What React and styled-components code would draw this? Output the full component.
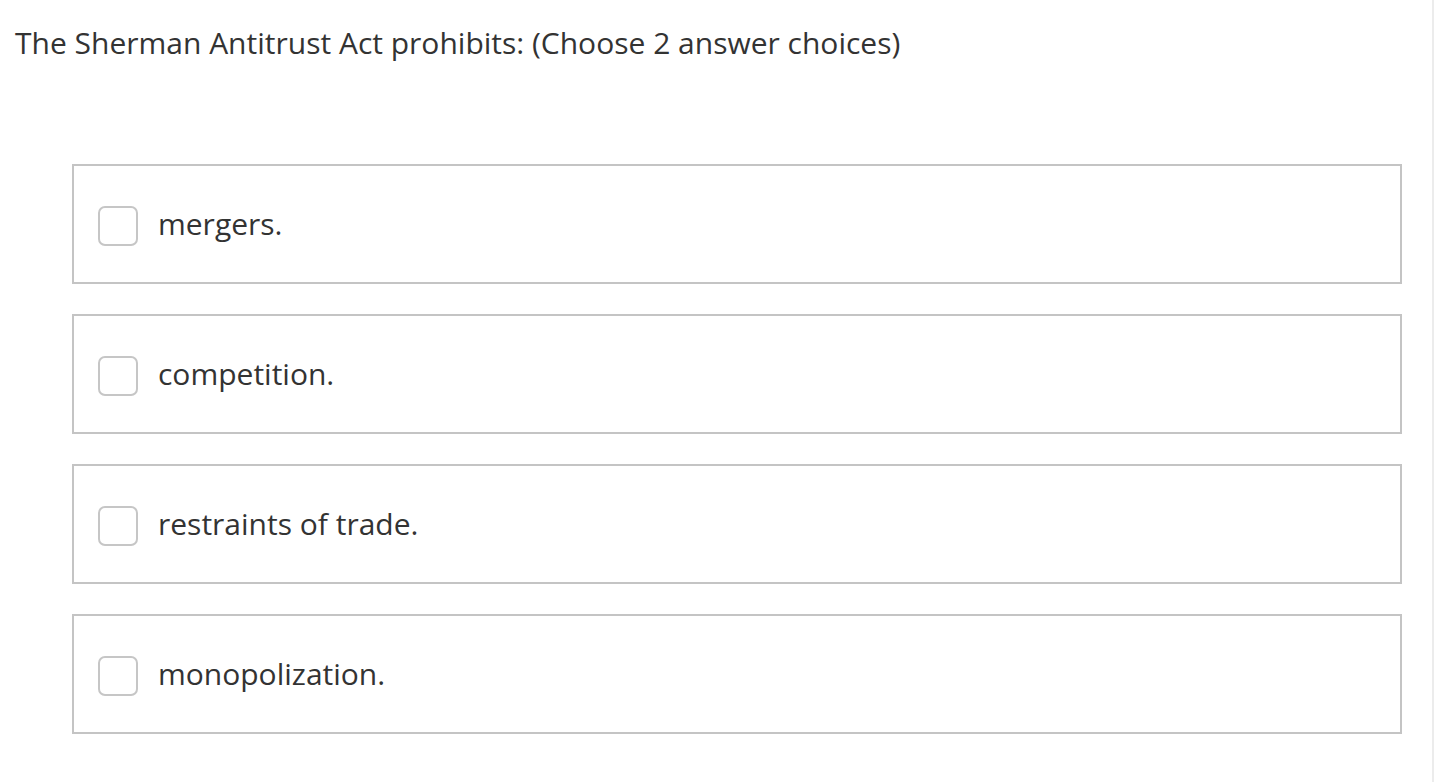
import React from 'react'
import styled, { createGlobalStyle } from 'styled-components'

const GlobalStyle = createGlobalStyle`
  html, body {
    margin: 0;
    padding: 0;
    background: #fff;
  }
  body {
    font-family: "Open Sans", "Noto Sans", sans-serif;
    color: #333;
  }
`

const Page = styled.div`
  box-sizing: border-box;
  min-height: 782px;
  padding: 23px 0 40px 0;
  border-right: 2px solid #ececec;
`

const Question = styled.h1`
  margin: 0 0 0 15px;
  font-size: 30px;
  font-weight: 400;
  line-height: 40px;
  color: #333;
`

const Options = styled.div`
  display: flex;
  flex-direction: column;
  gap: 30px;
  margin: 101px 30px 0 72px;
`

const Option = styled.label`
  box-sizing: border-box;
  height: 120px;
  display: flex;
  align-items: center;
  gap: 20px;
  padding: 0 24px;
  border: 2px solid #c4c4c4;
  background: #fff;
  cursor: pointer;
`

const Box = styled.span`
  box-sizing: border-box;
  width: 40px;
  height: 40px;
  margin-top: 3px;
  border: 2px solid #c6c6c6;
  border-radius: 7px;
  background: #fff;
  flex-shrink: 0;
`

const Text = styled.span`
  font-size: 30px;
  line-height: 40px;
  color: #333;
`

const choices = ['mergers.', 'competition.', 'restraints of trade.', 'monopolization.']

const App = () => {
  return (
    <Page>
      <GlobalStyle />
      <Question>The Sherman Antitrust Act prohibits: (Choose 2 answer choices)</Question>
      <Options>
        {choices.map((c) => (
          <Option key={c}>
            <Box />
            <Text>{c}</Text>
          </Option>
        ))}
      </Options>
    </Page>
  )
}

export default App
